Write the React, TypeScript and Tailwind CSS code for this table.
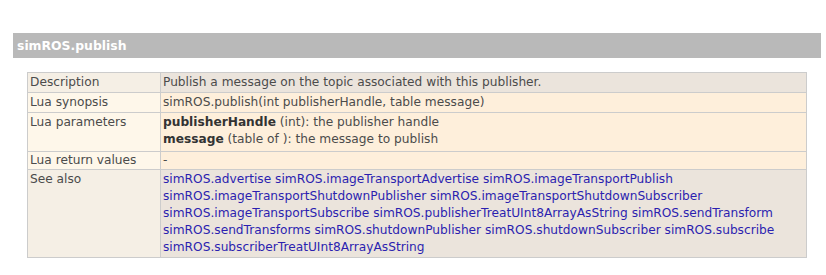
import React from 'react';

const links = [
  'simROS.advertise',
  'simROS.imageTransportAdvertise',
  'simROS.imageTransportPublish',
  'simROS.imageTransportShutdownPublisher',
  'simROS.imageTransportShutdownSubscriber',
  'simROS.imageTransportSubscribe',
  'simROS.publisherTreatUInt8ArrayAsString',
  'simROS.sendTransform',
  'simROS.sendTransforms',
  'simROS.shutdownPublisher',
  'simROS.shutdownSubscriber',
  'simROS.subscribe',
  'simROS.subscriberTreatUInt8ArrayAsString',
];

// filas alternas: impar gris-beige, par crema
const Row: React.FC<{ label: string; odd?: boolean; tight?: boolean; children: React.ReactNode }> = ({ label, odd, tight, children }) => (
  <tr>
    <td className={`w-[133px] border border-[#cccccc] px-[2px] align-top ${tight ? 'py-0' : 'py-px'} ${odd ? 'bg-[#f5efe5]' : 'bg-[#fef7ea]'}`}>
      {label}
    </td>
    <td className={`border border-[#cccccc] px-[2px] align-top ${tight ? 'py-0' : 'py-px'} ${odd ? 'bg-[#ebe4dc]' : 'bg-[#feefdb]'}`}>
      {children}
    </td>
  </tr>
);

export default function App() {
  return (
    <div className="w-[826px] h-[275px] bg-white pl-[13px] pr-[5px] pt-[33px] font-['DejaVu_Sans',sans-serif] text-[12.2px] leading-[17px] text-[#4b4b4b]">
      {/* Cabecera */}
      <div className="h-[25px] bg-[#b9b9b9] px-[4px] flex items-center text-white font-bold text-[12.4px]">
        simROS.publish
      </div>

      {/* Tabla */}
      <table className="mt-[14px] ml-[14px] w-[780px] border-collapse border border-[#cccccc]">
        <tbody>
          <Row label="Description" odd>
            Publish a message on the topic associated with this publisher.
          </Row>
          <Row label="Lua synopsis">simROS.publish(int publisherHandle, table message)</Row>
          <Row label="Lua parameters">
            <div className="pb-[2px]">
              <div>
                <span className="font-bold text-[#333]">publisherHandle</span> (int): the publisher handle
              </div>
              <div>
                <span className="font-bold text-[#333]">message</span> (table of ): the message to publish
              </div>
            </div>
          </Row>
          <Row label="Lua return values" tight>-</Row>
          <Row label="See also" odd>
            {links.map((l, i) => (
              <React.Fragment key={l}>
                <a href="#" className="text-[#2c1fb0]">{l}</a>
                {i < links.length - 1 && ' '}
              </React.Fragment>
            ))}
          </Row>
        </tbody>
      </table>
    </div>
  );
}
